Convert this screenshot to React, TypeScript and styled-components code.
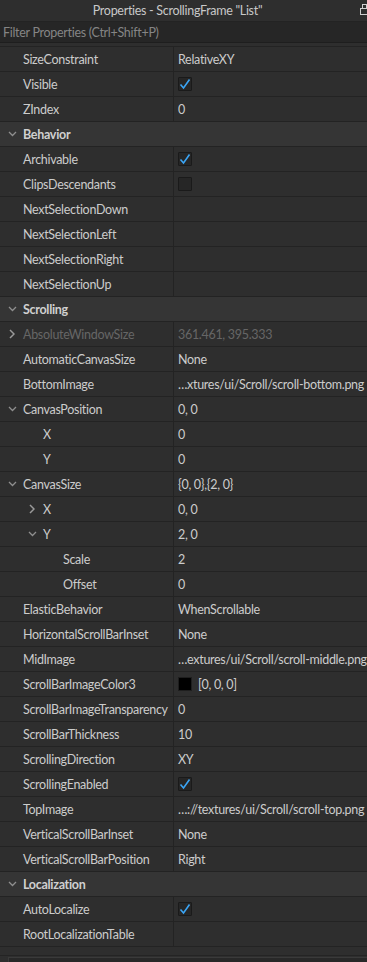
import React from "react";
import styled, { createGlobalStyle } from "styled-components";

const GlobalStyle = createGlobalStyle`
  html, body {
    margin: 0;
    padding: 0;
    background: #2e2e2e;
  }
  body {
    font-family: "Lato", "Noto Sans", sans-serif;
    -webkit-font-smoothing: antialiased;
  }
`;

type Value =
  | { type: "text"; text: string }
  | { type: "check"; checked: boolean }
  | { type: "color"; color: string; text: string };

type Row =
  | { kind: "category"; name: string }
  | {
      kind: "prop";
      name: string;
      depth?: number;
      expand?: "open" | "closed";
      disabled?: boolean;
      value?: Value;
    };

const t = (text: string): Value => ({ type: "text", text });
const check = (checked: boolean): Value => ({ type: "check", checked });

const rows: Row[] = [
  { kind: "prop", name: "SizeConstraint", value: t("RelativeXY") },
  { kind: "prop", name: "Visible", value: check(true) },
  { kind: "prop", name: "ZIndex", value: t("0") },
  { kind: "category", name: "Behavior" },
  { kind: "prop", name: "Archivable", value: check(true) },
  { kind: "prop", name: "ClipsDescendants", value: check(false) },
  { kind: "prop", name: "NextSelectionDown" },
  { kind: "prop", name: "NextSelectionLeft" },
  { kind: "prop", name: "NextSelectionRight" },
  { kind: "prop", name: "NextSelectionUp" },
  { kind: "category", name: "Scrolling" },
  { kind: "prop", name: "AbsoluteWindowSize", expand: "closed", disabled: true, value: t("361.461, 395.333") },
  { kind: "prop", name: "AutomaticCanvasSize", value: t("None") },
  { kind: "prop", name: "BottomImage", value: t("…xtures/ui/Scroll/scroll-bottom.png") },
  { kind: "prop", name: "CanvasPosition", expand: "open", value: t("0, 0") },
  { kind: "prop", name: "X", depth: 1, value: t("0") },
  { kind: "prop", name: "Y", depth: 1, value: t("0") },
  { kind: "prop", name: "CanvasSize", expand: "open", value: t("{0, 0},{2, 0}") },
  { kind: "prop", name: "X", depth: 1, expand: "closed", value: t("0, 0") },
  { kind: "prop", name: "Y", depth: 1, expand: "open", value: t("2, 0") },
  { kind: "prop", name: "Scale", depth: 2, value: t("2") },
  { kind: "prop", name: "Offset", depth: 2, value: t("0") },
  { kind: "prop", name: "ElasticBehavior", value: t("WhenScrollable") },
  { kind: "prop", name: "HorizontalScrollBarInset", value: t("None") },
  { kind: "prop", name: "MidImage", value: t("…extures/ui/Scroll/scroll-middle.png") },
  { kind: "prop", name: "ScrollBarImageColor3", value: { type: "color", color: "#000000", text: "[0, 0, 0]" } },
  { kind: "prop", name: "ScrollBarImageTransparency", value: t("0") },
  { kind: "prop", name: "ScrollBarThickness", value: t("10") },
  { kind: "prop", name: "ScrollingDirection", value: t("XY") },
  { kind: "prop", name: "ScrollingEnabled", value: check(true) },
  { kind: "prop", name: "TopImage", value: t("…://textures/ui/Scroll/scroll-top.png") },
  { kind: "prop", name: "VerticalScrollBarInset", value: t("None") },
  { kind: "prop", name: "VerticalScrollBarPosition", value: t("Right") },
  { kind: "category", name: "Localization" },
  { kind: "prop", name: "AutoLocalize", value: check(true) },
  { kind: "prop", name: "RootLocalizationTable" },
];

const Chevron = ({ open }: { open: boolean }) =>
  open ? (
    <svg width="9" height="6" viewBox="0 0 9 6">
      <polyline points="1,1 4.5,4.5 8,1" fill="none" stroke="#8f8f8f" strokeWidth="1.3" />
    </svg>
  ) : (
    <svg width="6" height="10" viewBox="0 0 6 10">
      <polyline points="1,1 5,5 1,9" fill="none" stroke="#9a9a9a" strokeWidth="1.5" />
    </svg>
  );

const CheckMark = () => (
  <svg width="12" height="12" viewBox="0 0 12 12">
    <polyline points="1.5,6.5 4.5,10 10.5,1.5" fill="none" stroke="#3ba5f5" strokeWidth="1.6" />
  </svg>
);

const App = () => {
  return (
    <>
      <GlobalStyle />
      <Panel>
        <TitleBar>
          <Title>Properties - ScrollingFrame "List"</Title>
          <DockIcon>
            <svg width="10" height="12" viewBox="0 0 10 12">
              <rect x="2.5" y="0.5" width="4" height="4" fill="none" stroke="#cfcfcf" />
              <rect x="0.5" y="4.5" width="9" height="6" fill="none" stroke="#cfcfcf" />
            </svg>
          </DockIcon>
        </TitleBar>
        <FilterBar>Filter Properties (Ctrl+Shift+P)</FilterBar>
        <List>
          {rows.map((row, i) =>
            row.kind === "category" ? (
              <CategoryRow key={i}>
                <Expander $depth={0}>
                  <Chevron open />
                </Expander>
                <CategoryName>{row.name}</CategoryName>
              </CategoryRow>
            ) : (
              <PropRow key={i}>
                <NameCell $disabled={row.disabled}>
                  <Expander $depth={row.depth ?? 0}>
                    {row.expand && <Chevron open={row.expand === "open"} />}
                  </Expander>
                  <NameText>{row.name}</NameText>
                </NameCell>
                <ValueCell $disabled={row.disabled}>
                  {row.value?.type === "text" && <ValueText>{row.value.text}</ValueText>}
                  {row.value?.type === "check" && (
                    <CheckBox>{row.value.checked && <CheckMark />}</CheckBox>
                  )}
                  {row.value?.type === "color" && (
                    <>
                      <Swatch $color={row.value.color} />
                      <ValueText>{row.value.text}</ValueText>
                    </>
                  )}
                </ValueCell>
              </PropRow>
            )
          )}
        </List>
        <Footer>
          <FooterBox />
        </Footer>
      </Panel>
    </>
  );
};

export default App;

const Panel = styled.div`
  width: 367px;
  height: 962px;
  overflow: hidden;
  display: flex;
  flex-direction: column;
  background: #2e2e2e;
  color: #cccccc;
  font-size: 12.5px;
  letter-spacing: -0.3px;
`;

const TitleBar = styled.div`
  position: relative;
  height: 21px;
  flex: none;
  display: flex;
  align-items: center;
  justify-content: center;
  padding-right: 12px;
  background: #2e2e2e;
  border-bottom: 1px solid #232323;
`;

const Title = styled.div`
  color: #c8c8c8;
`;

const DockIcon = styled.div`
  position: absolute;
  right: -3px;
  top: 4px;
  display: flex;
`;

const FilterBar = styled.div`
  height: 20px;
  flex: none;
  display: flex;
  align-items: center;
  padding-left: 3px;
  background: #262626;
  border-bottom: 1px solid #1e1e1e;
  color: #858585;
`;

const List = styled.div`
  flex: none;
  margin-top: 3px;
  border-top: 1px solid #232323;
`;

const CategoryRow = styled.div`
  height: 24px;
  display: flex;
  align-items: center;
  background: #353535;
  border-bottom: 1px solid #232323;
`;

const CategoryName = styled.div`
  font-weight: 700;
  color: #d0d0d0;
`;

const PropRow = styled.div`
  height: 24px;
  display: grid;
  grid-template-columns: 174px 1fr;
  border-bottom: 1px solid #232323;
`;

const NameCell = styled.div<{ $disabled?: boolean }>`
  display: flex;
  align-items: center;
  border-right: 1px solid #232323;
  color: ${(p) => (p.$disabled ? "#666666" : "#cccccc")};
  overflow: hidden;
  white-space: nowrap;
`;

const Expander = styled.div<{ $depth: number }>`
  width: 16px;
  flex: none;
  margin-left: ${(p) => 4 + p.$depth * 20}px;
  margin-right: 3px;
  display: flex;
  align-items: center;
  justify-content: center;
`;

const NameText = styled.span``;

const ValueCell = styled.div<{ $disabled?: boolean }>`
  display: flex;
  align-items: center;
  gap: 6px;
  padding-left: 4px;
  color: ${(p) => (p.$disabled ? "#666666" : "#cccccc")};
  overflow: hidden;
  white-space: nowrap;
`;

const ValueText = styled.span``;

const CheckBox = styled.div`
  width: 12px;
  height: 12px;
  display: flex;
  align-items: center;
  justify-content: center;
  background: #262626;
  border: 1px solid #1a1a1a;
  border-radius: 1px;
`;

const Swatch = styled.div<{ $color: string }>`
  width: 12px;
  height: 12px;
  background: ${(p) => p.$color};
  border: 1px solid #1e1e1e;
`;

const Footer = styled.div`
  flex: 1;
  margin-top: 8px;
  border-top: 1px solid #242424;
  padding-top: 1px;
  padding-left: 8px;
  display: flex;
`;

const FooterBox = styled.div`
  flex: 1;
  background: #282828;
  border-top: 1px solid #3a3a3a;
  border-left: 1px solid #3a3a3a;
`;
